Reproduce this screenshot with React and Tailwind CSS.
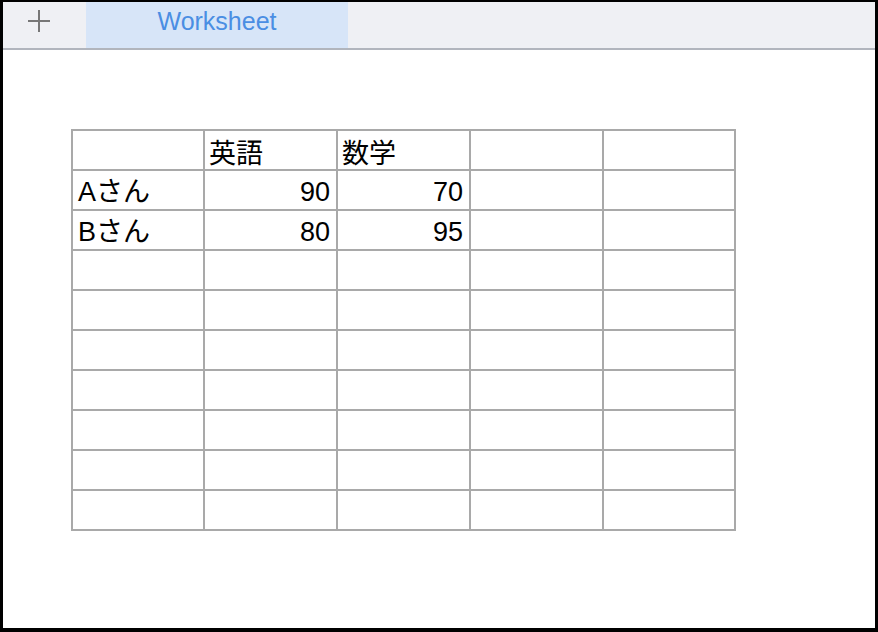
import React from "react";

const font = { fontFamily: '"Liberation Sans", "Noto Sans CJK JP", sans-serif' };

const rows = [
  ["", "英語", "数学", "", ""],
  ["Aさん", "90", "70", "", ""],
  ["Bさん", "80", "95", "", ""],
  ...Array.from({ length: 7 }, () => ["", "", "", "", ""]),
];

export default function App() {
  return (
    <div
      className="w-[878px] h-[632px] bg-black pt-[2px] pl-[3px] pr-[3px] pb-[4px]"
      style={font}
    >
      <div className="w-full h-full bg-white flex flex-col">
        <div className="h-[48px] shrink-0 bg-[#eff0f4] border-b-2 border-[#b1b5bd] flex">
          <div className="w-[83px] pl-[25px] pt-[8px]">
            <svg width="22" height="22" viewBox="0 0 22 22">
              <rect x="0" y="10" width="22" height="2" fill="#777777" />
              <rect x="10" y="0" width="2" height="22" fill="#777777" />
            </svg>
          </div>
          <div className="w-[262px] h-full bg-[#d7e5f8] flex justify-center pt-[7px]">
            <span className="text-[25px] leading-[25px] text-[#4a8ee3]">Worksheet</span>
          </div>
        </div>
        <div className="ml-[68px] mt-[79px] w-fit grid grid-cols-[132px_133px_133px_133px_132px] auto-rows-[40px] border-l-2 border-t-2 border-[#a9a9a9]">
          {rows.map((r, ri) =>
            r.map((c, ci) => (
              <div
                key={ri + "-" + ci}
                className={
                  "border-r-2 border-b-2 border-[#a9a9a9] text-[27px] leading-[27px] text-black whitespace-nowrap " +
                  (ri === 0 ? "pt-[10px] pl-[4px]" : "pt-[8px] ") +
                  (ri > 0 && ci > 0 ? "text-right pr-[6px]" : ri > 0 ? "pl-[5px]" : "")
                }
              >
                {c}
              </div>
            ))
          )}
        </div>
      </div>
    </div>
  );
}
